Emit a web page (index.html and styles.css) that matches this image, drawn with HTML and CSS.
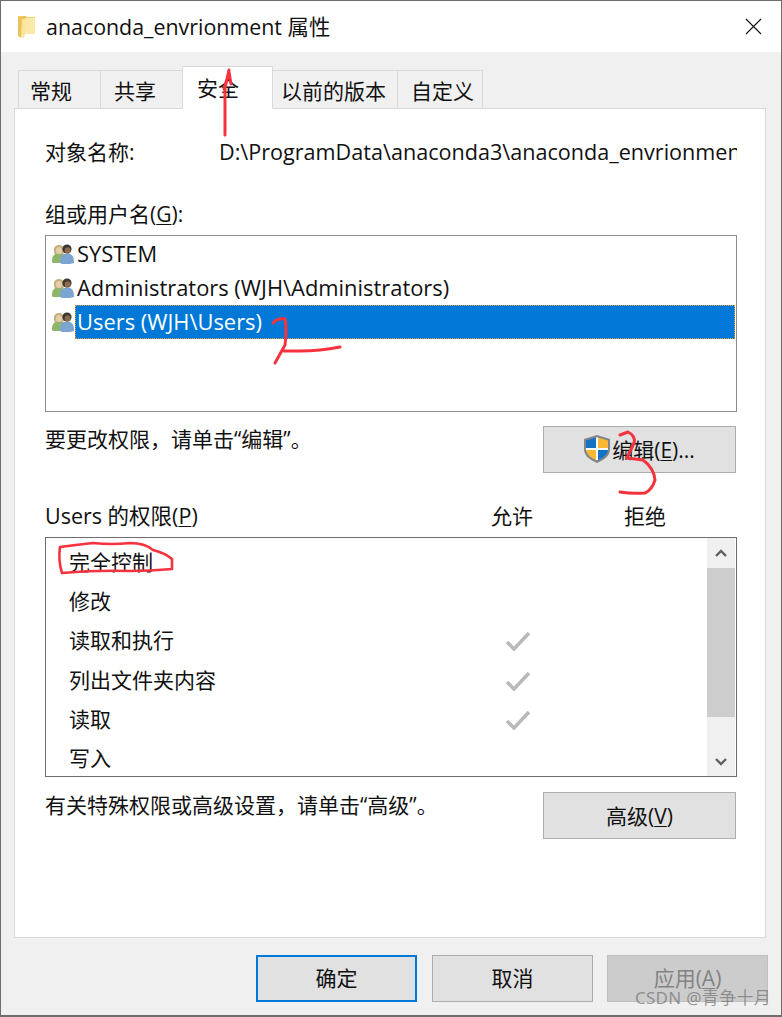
FILE: index.html
```html
<!DOCTYPE html>
<html lang="zh-CN">
<head>
<meta charset="utf-8">
<title>anaconda_envrionment 属性</title>
<link rel="stylesheet" href="styles.css">
</head>
<body>
<svg class="defs" width="0" height="0" aria-hidden="true">
  <symbol id="people" viewBox="0 0 22 20">
    <path class="p-back-hair" d="M2 8C1 3 4 1 7 1s6 2 5 7l-1 3H3z"/>
    <ellipse class="p-back-face" cx="7" cy="6.5" rx="3" ry="3.6"/>
    <path class="p-back-body" d="M0 18c0-5 1-7 4-8h6c2 1 3 2 3 4v4l-3 1H1z"/>
    <path class="p-front-body" d="M8 19c0-5 1-8 4-9h6c3 1 4 4 4 9l-4 1h-8z"/>
    <circle class="p-front-hair" cx="15" cy="5" r="4.6"/>
    <ellipse class="p-front-face" cx="15.6" cy="6.4" rx="3" ry="3.2"/>
  </symbol>
</svg>
<div class="window">
  <header class="titlebar">
    <svg class="folder" width="17" height="24" viewBox="0 0 17 24">
      <path d="M0 1h8l1 1h8v17H4z" fill="#f3d06e"/>
      <path d="M0 2l8-1v18H4l-1 4-3-2z" fill="#e9c25e"/>
      <path d="M4 4h13v15H7l-1 4-3-1z" fill="#fbe39a"/>
      <path d="M7 3h10v16H7z" fill="#fde8a8"/>
    </svg>
    <h1 class="title">anaconda_envrionment 属性</h1>
    <svg class="close" width="17" height="17" viewBox="0 0 17 17">
      <path d="M1 1l15 15M16 1L1 16" stroke="#111" stroke-width="1.1" fill="none"/>
    </svg>
  </header>
  <main class="body">
    <nav class="tabs">
      <span class="tab tab-a">常规</span>
      <span class="tab tab-b">共享</span>
      <span class="tab tab-active">安全</span>
      <span class="tab tab-c">以前的版本</span>
      <span class="tab tab-d">自定义</span>
    </nav>
    <section class="panel">
      <div class="object-row">
        <span class="object-label">对象名称:</span>
        <span class="object-path">D:\ProgramData\anaconda3\anaconda_envrionment</span>
      </div>
      <div class="group-label">组或用户名(<u>G</u>):</div>
      <ul class="user-list">
        <li class="user"><svg class="people" width="22" height="20"><use href="#people"/></svg><span class="user-name">SYSTEM</span></li>
        <li class="user"><svg class="people" width="22" height="20"><use href="#people"/></svg><span class="user-name">Administrators (WJH\Administrators)</span></li>
        <li class="user user-selected"><svg class="people" width="22" height="20"><use href="#people"/></svg><span class="user-name">Users (WJH\Users)</span></li>
      </ul>
      <div class="action-row action-edit">
        <span class="hint">要更改权限，请单击“编辑”。</span>
        <button class="btn btn-side" type="button">
          <svg class="shield" width="26" height="28" viewBox="0 0 26 28">
            <path d="M13 0l13 4v10c0 7-6 11-13 14C6 25 0 21 0 14V4z" fill="#7f868c"/>
            <path d="M14 2.5l10 3V13H14z" fill="#f9b934"/>
            <path d="M12 2.500L2 5.500V13h10z" fill="#1572c4"/>
            <path d="M2 15h10v10c-5-2-9-5-10-10z" fill="#f9b934"/>
            <path d="M24 15H14v10c5-2 9-5 10-10z" fill="#1572c4"/>
            <path d="M12 2.500h2V25h-2zM2 13h22v2H2z" fill="#fff"/>
          </svg>
          <span>编辑(<u>E</u>)...</span>
        </button>
      </div>
      <div class="perm-header">
        <span class="perm-title">Users 的权限(<u>P</u>)</span>
        <span class="perm-allow">允许</span>
        <span class="perm-deny">拒绝</span>
      </div>
      <div class="perm-box">
        <ul class="perm-list">
          <li class="perm">完全控制</li>
          <li class="perm">修改</li>
          <li class="perm">读取和执行<svg class="check" width="26" height="22" viewBox="0 0 26 22"><path d="M2 12l7 7L24 3" fill="none" stroke="#b9b9b9" stroke-width="3.4"/></svg></li>
          <li class="perm">列出文件夹内容<svg class="check" width="26" height="22" viewBox="0 0 26 22"><path d="M2 12l7 7L24 3" fill="none" stroke="#b9b9b9" stroke-width="3.4"/></svg></li>
          <li class="perm">读取<svg class="check" width="26" height="22" viewBox="0 0 26 22"><path d="M2 12l7 7L24 3" fill="none" stroke="#b9b9b9" stroke-width="3.4"/></svg></li>
          <li class="perm">写入</li>
        </ul>
        <div class="scrollbar">
          <div class="scroll-end scroll-up"><svg width="14" height="10" viewBox="0 0 14 10"><path d="M2 8l5-5 5 5" fill="none" stroke="#606060" stroke-width="2.4"/></svg></div>
          <div class="scroll-thumb"></div>
          <div class="scroll-end scroll-down"><svg width="14" height="10" viewBox="0 0 14 10"><path d="M2 2l5 5 5-5" fill="none" stroke="#606060" stroke-width="2.4"/></svg></div>
        </div>
      </div>
      <div class="action-row action-advanced">
        <span class="hint">有关特殊权限或高级设置，请单击“高级”。</span>
        <button class="btn btn-side" type="button"><span>高级(<u>V</u>)</span></button>
      </div>
    </section>
    <footer class="footer">
      <button class="btn btn-foot btn-default" type="button">确定</button>
      <button class="btn btn-foot" type="button">取消</button>
      <button class="btn btn-foot btn-disabled" type="button"><span>应用(<u>A</u>)</span></button>
    </footer>
  </main>
  <svg class="ink" width="782" height="1017" viewBox="0 0 782 1017" aria-hidden="true">
    <path d="M225 135L225 88L229 70M224 89L229 72L231 84"/>
    <path d="M273 323Q277 318 285 319Q287 330 285 345L275 363M284 351L300 351Q320 351 340 347"/>
    <path d="M620 435L628 432Q636 436 634 443L627 458L643 460Q654 468 655 480Q652 490 645 493Q632 494 620 492"/>
    <path class="ink-thin" d="M60 547Q75 545 93 543Q112 545 130 543Q145 543 153 550Q165 553 172 559L172 569Q150 571 130 571Q95 570 62 573Q58 560 60 547Z"/>
  </svg>
  <span class="watermark">CSDN @青争十月</span>
</div>
</body>
</html>
```

FILE: styles.css
```css
* { box-sizing: border-box; }
html, body { margin: 0; padding: 0; }
body {
  width: 782px;
  height: 1017px;
  overflow: hidden;
  font-family: "Open Sans", "Noto Sans CJK SC", sans-serif;
  font-size: 21px;
  color: #111;
  background: #f0f0f0;
}
.defs { position: absolute; }
u { text-underline-offset: 2px; text-decoration-thickness: 1px; }
ul { list-style: none; margin: 0; padding: 0; }

.window {
  position: relative;
  width: 782px;
  height: 1017px;
  border: 1px solid #6d6d6d;
  border-width: 1px 1px 2px 1px;
  display: flex;
  flex-direction: column;
  background: #f0f0f0;
}

.titlebar {
  height: 51px;
  flex: none;
  display: flex;
  align-items: center;
  padding: 0 19px 0 17px;
  background: #fff;
}
.folder { flex: none; }
.title {
  margin: 0 0 2px 11px;
  font-size: 21.4px;
  font-weight: 400;
  flex: 1;
  white-space: nowrap;
}
.close { flex: none; }

.body {
  flex: 1;
  display: flex;
  flex-direction: column;
  padding: 14px 13px 0 13px;
  min-height: 0;
}

.tabs {
  display: flex;
  align-items: flex-end;
  height: 43px;
  padding-left: 4px;
  position: relative;
  z-index: 1;
  margin-bottom: -1px;
}
.tab {
  height: 39px;
  display: flex;
  align-items: center;
  border: 1px solid #d9d9d9;
  border-left-width: 0;
  background: #f0f0f0;
  white-space: nowrap;
}
.tab-a { width: 83px; border-left-width: 1px; padding-left: 11px; }
.tab-b { width: 82px; padding-left: 13px; }
.tab-active {
  width: 91px;
  height: 43px;
  margin-left: -1px;
  padding: 0 0 2px 14px;
  background: #fff;
  border-left-width: 1px;
  border-bottom: 1px solid #fff;
}
.tab-c { width: 125px; padding-left: 8px; }
.tab-d { width: 85px; padding-left: 13px; }

.panel {
  width: 752px;
  height: 830px;
  flex: none;
  background: #fff;
  border: 1px solid #d9d9d9;
  padding: 20px 0 0 30px;
}

.object-row {
  width: 692px;
  height: 44px;
  display: flex;
  align-items: center;
  overflow: hidden;
}
.object-label { width: 174px; flex: none; }
.object-path { white-space: nowrap; overflow: hidden; flex: 1; font-size: 21.6px; }

.group-label {
  margin-top: 30px;
  height: 24px;
  line-height: 22px;
}

.user-list {
  margin-top: 8px;
  width: 692px;
  height: 177px;
  border: 1px solid #8c8c96;
  padding: 1px;
}
.user {
  height: 34px;
  display: flex;
  align-items: center;
  padding-left: 5px;
}
.people { flex: none; margin-right: 1px; }
.user-name {
  flex: 1;
  height: 34px;
  line-height: 34px;
  padding-left: 2px;
  font-size: 21.9px;
}
.p-back-hair { fill: #c4b079; }
.p-back-face { fill: #e6cdb0; }
.p-back-body { fill: #8fb56a; }
.p-front-hair { fill: #3c3630; }
.p-front-face { fill: #8a6a50; }
.p-front-body { fill: #7ba6d2; }
.user-selected .user-name {
  background: #0078d7;
  color: #fff;
  outline: 1px dotted #e0a040;
  outline-offset: -1px;
}
.user-selected .p-back-hair { fill: #4a8ea6; }
.user-selected .p-back-face { fill: #6b9fb5; }
.user-selected .p-back-body { fill: #3d94a6; }
.user-selected .p-front-hair { fill: #22618f; }
.user-selected .p-front-face { fill: #33708f; }
.user-selected .p-front-body { fill: #3487cf; }

.action-row {
  width: 691px;
  display: flex;
  justify-content: space-between;
  align-items: flex-start;
}
.action-edit { margin-top: 14px; height: 47px; }
.action-advanced { margin-top: 15px; height: 47px; }
.hint { height: 28px; line-height: 26px; }

.btn {
  font: inherit;
  color: #111;
  background: #e1e1e1;
  border: 1px solid #adadad;
  padding: 0 0 2px;
  height: 47px;
  display: flex;
  align-items: center;
  justify-content: center;
  white-space: nowrap;
}
.btn-side { width: 193px; }
.shield { flex: none; margin-right: 2px; }

.perm-header {
  margin-top: 30px;
  height: 28px;
  line-height: 26px;
  width: 692px;
  display: flex;
}
.perm-title { width: 446px; font-size: 21.5px; }
.perm-allow { width: 133px; }
.perm-deny { flex: 1; }

.perm-box {
  margin-top: 6px;
  width: 692px;
  height: 240px;
  border: 1px solid #6d6d6d;
  display: flex;
}
.perm-list { flex: 1; padding-top: 4px; overflow: hidden; }
.perm {
  position: relative;
  height: 39.2px;
  line-height: 40px;
  padding-left: 23px;
}
.check { position: absolute; left: 459px; top: 10px; }

.scrollbar {
  width: 28px;
  margin-right: 1px;
  display: flex;
  flex-direction: column;
  background: #f0f0f0;
}
.scroll-end { display: flex; justify-content: center; }
.scroll-up { height: 30px; align-items: center; }
.scroll-thumb { height: 149px; background: #cdcdcd; }
.scroll-down { flex: 1; align-items: flex-end; padding-bottom: 9px; }

.footer {
  flex: 1;
  display: flex;
  justify-content: flex-end;
  padding-top: 17px;
  gap: 15px;
}
.btn-foot { width: 161px; padding-bottom: 4px; }
.btn-default { border: 2px solid #0078d7; }
.btn-disabled {
  margin-left: -1px;
  background: #cccccc;
  border-color: #bfbfbf;
  color: #838383;
}

.ink {
  position: absolute;
  left: -1px;
  top: -1px;
  z-index: 2;
  pointer-events: none;
  fill: none;
  stroke: #f5333f;
  stroke-width: 3;
  stroke-linecap: round;
  stroke-linejoin: round;
}
.ink-thin { stroke-width: 2.6; }

.watermark {
  position: absolute;
  z-index: 3;
  right: 10px;
  bottom: 7px;
  font-size: 17px;
  line-height: 20px;
  letter-spacing: 0.3px;
  color: rgba(120, 120, 120, 0.75);
  white-space: nowrap;
  font-family: "Noto Sans", "Noto Sans CJK SC", sans-serif;
}
```
